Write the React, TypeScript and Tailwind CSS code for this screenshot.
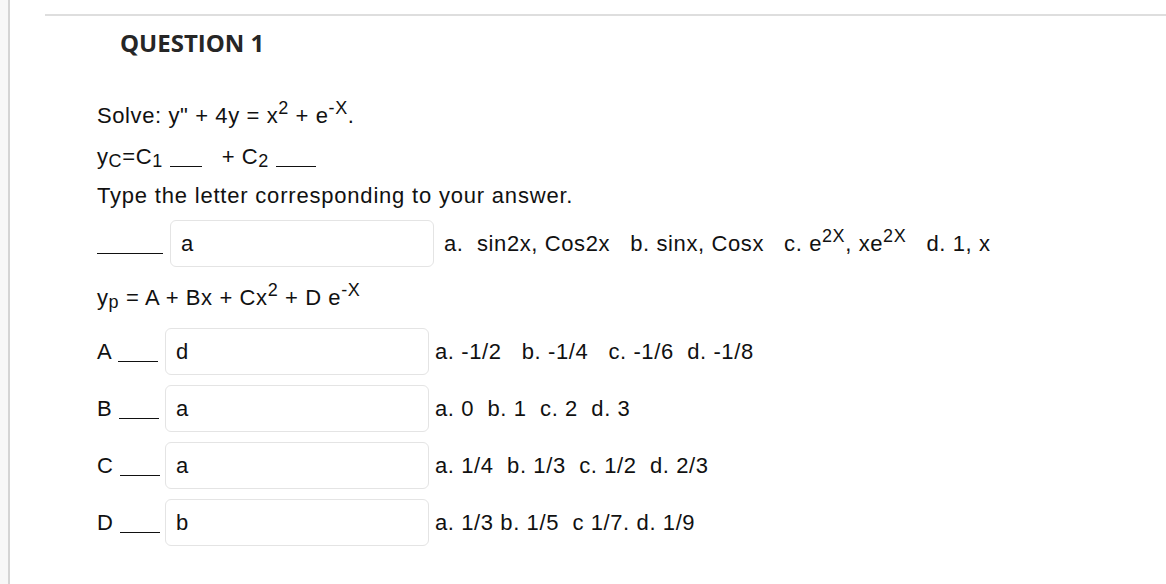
import React from 'react';

const Sup: React.FC<{ children: React.ReactNode }> = ({ children }) => (
    <sup className="text-[18px] relative -top-[9px]">{children}</sup>
);
const Sub: React.FC<{ children: React.ReactNode }> = ({ children }) => (
    <sub className="text-[18px] relative top-[3px]">{children}</sub>
);

const Blank: React.FC<{ w: string }> = ({ w }) => (
    <span className={`inline-block border-b border-[#111] align-[-3px] ${w}`} />
);

const AnswerRow: React.FC<{ letter: string; value: string; options: React.ReactNode }> = ({ letter, value, options }) => (
    <div className="flex items-center h-[47px]">
        <div className="w-[68px] whitespace-pre">
            {letter} <Blank w="w-[40px]" />
        </div>
        <div className="w-[264px] h-[47px] border border-[#e4e4e4] rounded-[6px] flex items-center px-[10px]">{value}</div>
        <div className="ml-[6px] whitespace-pre">{options}</div>
    </div>
);

export default function App() {
    const font = { fontFamily: '"Liberation Sans", Arial, sans-serif' };
    return (
        <div className="w-[1166px] h-[584px] bg-[#f7f7f7] flex overflow-hidden">
            <div className="ml-[8px] w-[2px] bg-[#d4d4d4]" />
            <div className="flex-1 bg-white">
                <div className="ml-[35px] mt-[14px] h-[2px] bg-[#dedede]" />
                <h2
                    className="ml-[110px] mt-[10px] text-[24px] leading-[34px] font-bold text-[#262626]"
                    style={{ fontFamily: '"Open Sans", sans-serif' }}
                >
                    QUESTION 1
                </h2>
                <div className="ml-[87px] mt-[37px] text-[22px] tracking-[0.6px] text-[#111]" style={font}>
                    <div className="h-[40px] leading-[38px]">
                        Solve: y" + 4y = x<Sup>2</Sup> + e<Sup>-X</Sup>.
                    </div>
                    <div className="h-[38px] leading-[40px] whitespace-pre">
                        y<Sub>C</Sub>=C<Sub>1</Sub> <Blank w="w-[32px]" />   + C<Sub>2</Sub> <Blank w="w-[40px]" />
                    </div>
                    <div className="h-[39px] leading-[42px] tracking-[0.8px]">Type the letter corresponding to your answer.</div>

                    <div className="mt-[6px] flex items-center h-[47px]">
                        <div className="w-[73px]">
                            <span className="inline-block w-[66px] border-b border-[#111] translate-y-[3px]" />
                        </div>
                        <div className="w-[264px] h-[47px] border border-[#e4e4e4] rounded-[6px] flex items-center px-[10px]">a</div>
                        <div className="ml-[10px] whitespace-pre">
                            a.  sin2x, Cos2x   b. sinx, Cosx   c. e<Sup>2X</Sup>, xe<Sup>2X</Sup>   d. 1, x
                        </div>
                    </div>

                    <div className="mt-[8px] h-[46px] leading-[46px]">
                        y<Sub>p</Sub> = A + Bx + Cx<Sup>2</Sup> + D e<Sup>-X</Sup>
                    </div>

                    <div className="mt-[7px] flex flex-col gap-[10px]">
                        <AnswerRow letter="A" value="d" options={<>a. -1/2   b. -1/4   c. -1/6  d. -1/8</>} />
                        <AnswerRow letter="B" value="a" options={<>a. 0  b. 1  c. 2  d. 3</>} />
                        <AnswerRow letter="C" value="a" options={<>a. 1/4  b. 1/3  c. 1/2  d. 2/3</>} />
                        <AnswerRow letter="D" value="b" options={<>a. 1/3 b. 1/5  c 1/7. d. 1/9</>} />
                    </div>
                </div>
            </div>
        </div>
    );
}
